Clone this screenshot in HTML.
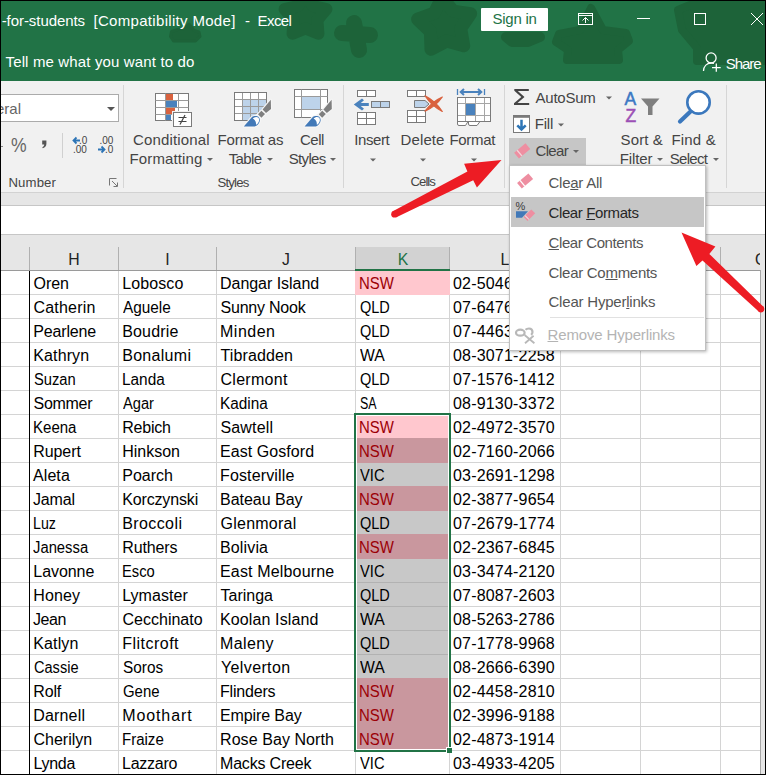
<!DOCTYPE html>
<html><head><meta charset="utf-8"><title>Excel</title>
<style>
html,body{margin:0;padding:0;}
body{width:766px;height:775px;position:relative;overflow:hidden;background:#fff;font-family:"Liberation Sans",sans-serif;}
.a{position:absolute;}
#frame{position:absolute;left:0;top:0;width:764px;height:773px;border:1px solid #000;z-index:50;pointer-events:none}
#title{position:absolute;left:1px;top:1px;width:764px;height:80px;background:#217346;overflow:hidden}
.tt{position:absolute;color:#fff;font-size:15px;white-space:pre;line-height:20px}
#ribbon{position:absolute;left:1px;top:81px;width:764px;height:111px;background:#f1f1f1;border-bottom:1px solid #d2d2d2}
#band{position:absolute;left:1px;top:193px;width:764px;height:12px;background:#e6e6e6}
#fbar{position:absolute;left:1px;top:205px;width:764px;height:30px;background:#fff;border-top:1px solid #c6c6c6;border-bottom:1px solid #c6c6c6;box-sizing:border-box}
#hdr{position:absolute;left:1px;top:235px;width:764px;height:35px;background:#e6e6e6}
.rl{position:absolute;color:#444;font-size:15px;line-height:19.5px;white-space:pre;text-align:center}
.gs{position:absolute;top:85px;width:1px;height:103px;background:#d6d6d6}
.gl{position:absolute;color:#444;font-size:13.2px;line-height:16px;white-space:pre}
.c{position:absolute;transform-origin:0 50%;font-size:16px;line-height:24px;height:24px;color:#000;white-space:pre}
.c.r{color:#9c0006}
.f{position:absolute}
.h{position:absolute;left:1px;width:759px;height:1px;background:#d4d4d4}
.v{position:absolute;top:271px;width:1px;height:504px;background:#d4d4d4}
.ch{position:absolute;top:249px;height:21px;line-height:21px;font-size:15.8px;color:#222;text-align:center}
.hs{position:absolute;top:247px;width:1px;height:23px;background:#b0b0b0}
.mi{position:absolute;left:548px;color:#444;font-size:15px;line-height:20px;white-space:pre}
.t{position:absolute;white-space:pre;line-height:20px;height:20px;z-index:30}
.t u{text-decoration:underline;text-underline-offset:0.5px;text-decoration-thickness:1px}
</style></head><body>
<div id="title">
<svg class="a" style="left:0;top:0" width="764" height="80" viewBox="1 1 764 80">
<g fill="#1d6339" stroke="#1d6339" stroke-linejoin="round" stroke-linecap="round">
<path d="M189 24 L194 30.500 L199 32 L200 36.500 L195.500 41 L173.500 41 L170.500 36.500 L171.500 31.500 L178 29.500 L184 28.500 Z" stroke-width="3"/>
<path d="M305.5 -6.0 L312.8 5.9 L326.4 9.2 L317.4 19.9 L318.4 33.8 L305.5 28.5 L292.6 33.8 L293.6 19.9 L284.6 9.2 L298.2 5.9 Z" stroke-width="12"/>
<path d="M354 23 L359 50 M342 33 L370 35" stroke-width="16" fill="none"/>
<path d="M442.1 -2.8 L453.0 11.1 L470.6 13.6 L460.7 28.3 L463.7 45.8 L446.7 40.9 L431.0 49.2 L430.4 31.5 L417.6 19.2 L434.3 13.1 Z" stroke-width="13"/>
<path d="M506 37 L540 37 L528 42 L512 42 Z" stroke-width="10"/>
<path d="M591 8 L603 30 L626 33 L629 41 L618 50 L619 60 L567 60 L568 50 L556 42 L559 34 L580 30 Z" stroke-width="8"/>
<path d="M678 10 L690 5 L770 5 L770 61 L697 61 L697 48 L682 30 Z" stroke-width="8"/>
</g>
</svg>
<div class="a" style="left:480px;top:7px;width:67px;height:23px;background:#fff;border-radius:1px"></div>
<svg class="a" style="left:0;top:0" width="764" height="80" viewBox="1 1 764 80" fill="none" stroke="#fff" stroke-width="1">
<rect x="578.500" y="13.500" width="14" height="11"/><path d="M578.500 15.500h14M585.500 23v-5.500M582.500 20.500l3-3 3 3"/>
<path d="M637 18.500h13"/>
<rect x="694.500" y="13.500" width="11" height="11"/>
<path d="M751 13l12 12M763 13l-12 12"/>
<circle cx="711.100" cy="57.900" r="5" stroke-width="1.300"/><path d="M703.500 71c0.200-5 3.500-8 8-8 1 0 1.800 0.100 2.500 0.300" stroke-width="1.300"/><path d="M716.300 63.400v8.400M712 67.600h8.700" stroke-width="1.300"/>
</svg>
</div>
<div id="ribbon"></div>
<div id="band"></div>
<div id="fbar"></div>
<div id="hdr"></div>

<!-- ribbon: number group -->
<div class="a" style="left:1px;top:94px;width:118px;height:28px;background:#fff;border:1px solid #ababab;border-left:none;box-sizing:border-box"></div>
<div class="rl" style="left:-4px;top:99px;color:#666;font-size:15px">eral</div>
<div class="a" style="left:107px;top:107px;width:0;height:0;border-left:4px solid transparent;border-right:4px solid transparent;border-top:4px solid #555"></div>
<div class="a" style="left:1px;top:146px;width:2px;height:1px;background:#888"></div>
<div class="rl" style="left:11px;top:134px;font-size:19.5px;line-height:22px;transform:scaleX(0.9);transform-origin:0 0;color:#666">%</div>
<svg class="a" style="left:40px;top:139px" width="9" height="11" viewBox="0 0 9 11"><path d="M2.200 1.500h4.200v3.200c0 2.200-1.200 3.600-3.600 4.600l-0.500-1c1.300-0.700 1.900-1.500 1.900-2.800h-2z" fill="#555"/></svg>
<div class="a" style="left:62px;top:133px;width:1px;height:25px;background:#d0d0d0"></div>
<svg class="a" style="left:70px;top:135px" width="46" height="20" viewBox="70 135 46 20">
<g font-family="Liberation Sans, sans-serif" font-size="10" fill="#444">
<text x="79" y="144.300">.0</text><text x="73" y="153.300">.00</text>
<text x="99.500" y="144.300">.00</text><text x="105" y="153.300">.0</text>
</g>
<g fill="none" stroke="#2e75b6" stroke-width="1.800"><path d="M80 140.500h-6.500M76.500 137.500l-3 3 3 3"/><path d="M98 149.500h6.500M101.500 146.500l3 3-3 3"/></g>
</svg>
<svg class="a" style="left:108px;top:177px" width="11" height="11" viewBox="0 0 11 11" fill="none" stroke="#777" stroke-width="1"><path d="M1.500 8.500v-7h7"/><path d="M4 4l5 5M9.500 5.500v4h-4"/></svg>
<div class="gs" style="left:123px"></div>
<div class="gs" style="left:343px"></div>
<div class="gs" style="left:504px"></div>
<div class="gs" style="left:726px"></div>

<div class="a" style="left:509px;top:138px;width:77px;height:27px;background:#c6c6c6"></div>

<!-- ribbon icons -->
<svg class="a" style="left:0;top:0" width="766" height="200" viewBox="0 0 766 200">
<!-- dropdown arrows -->
<g fill="#666">
<path d="M207 158h6l-3 3z"/><path d="M267 158h6l-3 3z"/><path d="M330 158h6l-3 3z"/>
<path d="M370 158.500h6l-3 3z"/><path d="M420 158.500h6l-3 3z"/><path d="M471 158.500h6l-3 3z"/>
<path d="M606 96.500h6l-3 3z"/><path d="M558 123.500h6l-3 3z"/><path d="M573 150h6l-3 3z"/>
<path d="M657 158h6l-3 3z"/><path d="M713 158h6l-3 3z"/>
</g>
<!-- conditional formatting -->
<g>
<rect x="155.500" y="93.500" width="33" height="27" fill="#fff" stroke="#7a7a7a"/>
<path d="M155.500 100.500h33M155.500 107.500h33M155.500 114.500h33M165.500 93.500v27M178.500 93.500v27" stroke="#9a9a9a" fill="none"/>
<rect x="166" y="94" width="7" height="6" fill="#d9623f"/><rect x="166" y="101" width="11" height="6" fill="#4a82bd"/>
<rect x="166" y="108" width="9" height="6" fill="#d9623f"/><rect x="166" y="115" width="5" height="5" fill="#4a82bd"/>
<rect x="172" y="111" width="21" height="17" fill="#f1f1f1"/>
<rect x="173.500" y="112.500" width="18" height="14" fill="#fff" stroke="#7a7a7a"/>
<path d="M178.500 117.500h8M178.500 121.500h8M185 115l-5 9.500" stroke="#444" stroke-width="1.200" fill="none"/>
</g>
<!-- format as table -->
<g>
<rect x="234.500" y="92.500" width="32" height="28" fill="#fff" stroke="#7a7a7a"/>
<rect x="243" y="100" width="24" height="21" fill="#bdd3ea"/>
<path d="M234.500 99.500h32M234.500 106.500h32M234.500 113.500h32M242.500 92.500v28M250.500 92.500v28M258.500 92.500v28" stroke="#9a9a9a" fill="none"/>
<rect x="234.500" y="92.500" width="32" height="28" fill="none" stroke="#7a7a7a"/>
<g>
<path d="M262.500 110 L268 104.500 L268 122 L248.500 122 L253 116.500 Z" fill="#f1f1f1"/>
<g stroke="#f6f6f6" stroke-width="2.200" stroke-linejoin="round" fill="#f6f6f6">
<path d="M270.800 99.800 L271 108.900 L266 113 L262.600 109.500 Z"/>
<path d="M261.400 110.800 L265 114 L261.400 117.700 L258 114.200 Z"/>
<path d="M243.800 126.600 L252 117 C253.500 115.800 257 115.500 258.600 117 C260.400 118.800 260.200 121.500 258.500 123.800 C257 125.800 255.500 126.600 253.500 126.600 Z"/>
</g>
<path d="M270.800 99.800 L271 108.900 L266 113 L262.600 109.500 Z" fill="#7f7f7f"/>
<path d="M261.400 110.800 L265 114 L261.400 117.700 L258 114.200 Z" fill="#7f7f7f"/>
<path d="M243.800 126.600 L252 117 C253.500 115.800 257 115.500 258.600 117 C260.400 118.800 260.200 121.500 258.500 123.800 C257 125.800 255.500 126.600 253.500 126.600 Z" fill="#4279b8"/>
<path d="M252.800 118.600 C254.300 116.700 257 116.400 258.200 117.600 C259.600 119.100 259.300 121.500 257.900 123.300 C257.300 124.100 256.700 124.500 256 124.700 C256.300 122.500 255.400 120.200 252.800 118.600 Z" fill="#fff"/>
</g>
</g>
<!-- cell styles -->
<g>
<rect x="294.500" y="89.500" width="33" height="28" fill="#fff" stroke="#7a7a7a"/>
<path d="M294.500 96.500h33M294.500 109.500h33M301.500 89.500v28M320.500 89.500v28" stroke="#9a9a9a" fill="none"/>
<rect x="302" y="97" width="18" height="12" fill="#bdd3ea"/>
<g transform="translate(60.800,0)">
<path d="M262.500 110 L268 104.500 L268 122 L248.500 122 L253 116.500 Z" fill="#f1f1f1"/>
<g stroke="#f6f6f6" stroke-width="2.200" stroke-linejoin="round" fill="#f6f6f6">
<path d="M270.800 99.800 L271 108.900 L266 113 L262.600 109.500 Z"/>
<path d="M261.400 110.800 L265 114 L261.400 117.700 L258 114.200 Z"/>
<path d="M243.800 126.600 L252 117 C253.500 115.800 257 115.500 258.600 117 C260.400 118.800 260.200 121.500 258.500 123.800 C257 125.800 255.500 126.600 253.500 126.600 Z"/>
</g>
<path d="M270.800 99.800 L271 108.900 L266 113 L262.600 109.500 Z" fill="#7f7f7f"/>
<path d="M261.400 110.800 L265 114 L261.400 117.700 L258 114.200 Z" fill="#7f7f7f"/>
<path d="M243.800 126.600 L252 117 C253.500 115.800 257 115.500 258.600 117 C260.400 118.800 260.200 121.500 258.500 123.800 C257 125.800 255.500 126.600 253.500 126.600 Z" fill="#4279b8"/>
<path d="M252.800 118.600 C254.300 116.700 257 116.400 258.200 117.600 C259.600 119.100 259.300 121.500 257.900 123.300 C257.300 124.100 256.700 124.500 256 124.700 C256.300 122.500 255.400 120.200 252.800 118.600 Z" fill="#fff"/>
</g>
</g>
<!-- insert -->
<g fill="#fff" stroke="#7a7a7a">
<rect x="357.500" y="90.500" width="18" height="6"/><path d="M366.500 90.500v6"/>
<rect x="371.500" y="101.500" width="18" height="6" fill="#bdd3ea"/><path d="M380.500 101.500v6"/>
<rect x="357.500" y="112.500" width="18" height="12"/><path d="M366.500 112.500v12M357.500 118.500h18"/>
<path d="M353.800 104.500 L362 98.400 L364 100.300 L360.800 103 L368.800 103 L368.800 106 L360.800 106 L364 108.700 L362 110.600 Z" fill="#4a82bd" stroke="none"/>
</g>
<!-- delete -->
<g fill="#fff" stroke="#7a7a7a">
<rect x="407.500" y="90.500" width="18" height="6"/><path d="M416.500 90.500v6"/>
<path d="M414.500 100.500h10.500l4 3.500-4 3.500h-10.500z" fill="#bdd3ea"/>
<rect x="407.500" y="110.500" width="18" height="12"/><path d="M416.500 110.500v12M407.500 116.500h18"/>
<path d="M425 95.800 Q435.800 101.300 442.300 111.500 Q431.500 106 425 95.800 Z" fill="#d9623f" stroke="#d9623f" stroke-width="1.200" stroke-linejoin="round"/><path d="M442.300 97 Q431.700 101.700 425 111.200 Q435.700 106.500 442.300 97 Z" fill="#d9623f" stroke="#d9623f" stroke-width="1.200" stroke-linejoin="round"/>
</g>
<!-- format -->
<g fill="#fff" stroke="#7a7a7a">
<rect x="457.500" y="97.500" width="33" height="24"/>
<path d="M458 103.500h32M458 115.500h32M465.500 98v23M475.500 98v23M484.500 98v23" stroke="#a6a6a6"/>
<rect x="466" y="104" width="9" height="11" fill="#4a82bd" stroke="none"/>
<path d="M457.500 121.500v2.500q0 1.500 1.500 1.500h6.500l2.500-4M468.500 121.500v2.500q0 1.500 1.500 1.500h7l3-4" fill="#fff"/>
<rect x="457.500" y="97.500" width="33" height="24" fill="none"/>
<path d="M457.500 89v6M484.500 89v6" stroke="#4a82bd" stroke-width="1.300" fill="none"/>
<path d="M461.500 92h19M464 89l-3.300 3 3.300 3M478 89l3.300 3-3.300 3" stroke="#4a82bd" stroke-width="2" fill="none"/>
</g>
<!-- sigma -->
<path d="M514.300 89h14.500v2h-11l6.700 5.900-7 6.100h11.700v2h-15.200v-1.700l7.300-6.400-7-6.200z" fill="#444"/>
<!-- fill -->
<rect x="513.500" y="116.500" width="16" height="16" fill="#fff" stroke="#7a7a7a"/><rect x="513" y="115" width="17" height="2.800" fill="#7a7a7a"/>
<path d="M521.500 119.800v9.500M517.300 125.300l4.200 4.200 4.200-4.200" stroke="#2e75b6" stroke-width="2.500" fill="none"/>
<!-- eraser -->
<g transform="translate(522.200,150.800) rotate(-40)"><rect x="-7.400" y="-3.700" width="14.800" height="7.400" fill="#ee8ea1"/><rect x="-4.200" y="-3.700" width="1.300" height="7.400" fill="#f3d5db"/></g>
<!-- sort a z -->
<g font-family="Liberation Sans, sans-serif" font-size="17.500">
<text x="624.500" y="104.500" fill="#3b78c4" stroke="#3b78c4" stroke-width="0.500">A</text><text x="625.500" y="121.600" fill="#9b4fb5" stroke="#9b4fb5" stroke-width="0.500">Z</text></g>
<path d="M641 98.500h18.500l-7 8v8.500h-4.500v-8.500z" fill="#7f7f7f"/>
<!-- magnifier -->
<circle cx="698.500" cy="102.400" r="11.200" fill="#fff" stroke="#3b78bd" stroke-width="2.600"/>
<path d="M690.500 111.500l-10.500 10" stroke="#3b78bd" stroke-width="4.200" stroke-linecap="round"/>
</svg>

<!-- column headers -->
<div class="a" style="left:356px;top:247px;width:93px;height:23px;background:#d2d2d2"></div>
<div class="hs" style="left:29px"></div><div class="hs" style="left:118px"></div><div class="hs" style="left:216px"></div><div class="hs" style="left:355px"></div><div class="hs" style="left:449px"></div><div class="hs" style="left:560px"></div><div class="hs" style="left:640px"></div><div class="hs" style="left:720px"></div>
<div class="a" style="left:1px;top:270px;width:764px;height:1px;background:#9a9a9a"></div>
<div class="a" style="left:355px;top:269px;width:95px;height:2px;background:#217346"></div>
<div class="ch" style="left:30px;width:88px">H</div>
<div class="ch" style="left:119px;width:97px">I</div>
<div class="ch" style="left:217px;width:138px">J</div>
<div class="ch" style="left:356px;width:94px;color:#217346">K</div>
<div class="ch" style="left:450px;width:110px">L</div>
<div class="ch" style="left:755px;width:5px;text-align:left;overflow:hidden">O</div>

<!-- grid -->
<div class="h" style="top:294px"></div>
<div class="h" style="top:318px"></div>
<div class="h" style="top:342px"></div>
<div class="h" style="top:366px"></div>
<div class="h" style="top:390px"></div>
<div class="h" style="top:414px"></div>
<div class="h" style="top:438px"></div>
<div class="h" style="top:462px"></div>
<div class="h" style="top:486px"></div>
<div class="h" style="top:510px"></div>
<div class="h" style="top:534px"></div>
<div class="h" style="top:558px"></div>
<div class="h" style="top:582px"></div>
<div class="h" style="top:606px"></div>
<div class="h" style="top:630px"></div>
<div class="h" style="top:654px"></div>
<div class="h" style="top:678px"></div>
<div class="h" style="top:702px"></div>
<div class="h" style="top:726px"></div>
<div class="h" style="top:750px"></div>
<div class="h" style="top:774px"></div>
<div class="v" style="left:118px"></div>
<div class="v" style="left:216px"></div>
<div class="v" style="left:355px"></div>
<div class="v" style="left:449px"></div>
<div class="v" style="left:560px"></div>
<div class="v" style="left:640px"></div>
<div class="v" style="left:720px"></div>
<div class="f" style="left:355px;top:271px;width:95px;height:24px;background:#ffc7ce"></div>
<div class="f" style="left:357px;top:416px;width:91px;height:333px;background:#c8c8c8"></div>
<div class="f" style="left:357px;top:416px;width:91px;height:22px;background:#ffc7ce"></div>
<div class="f" style="left:357px;top:438px;width:91px;height:25px;background:#c9979e"></div>
<div class="f" style="left:357px;top:486px;width:91px;height:25px;background:#c9979e"></div>
<div class="f" style="left:357px;top:534px;width:91px;height:25px;background:#c9979e"></div>
<div class="f" style="left:357px;top:582px;width:91px;height:1px;background:#b2b2b2"></div>
<div class="f" style="left:357px;top:606px;width:91px;height:1px;background:#b2b2b2"></div>
<div class="f" style="left:357px;top:630px;width:91px;height:1px;background:#b2b2b2"></div>
<div class="f" style="left:357px;top:654px;width:91px;height:1px;background:#b2b2b2"></div>
<div class="f" style="left:357px;top:678px;width:91px;height:25px;background:#c9979e"></div>
<div class="f" style="left:357px;top:702px;width:91px;height:25px;background:#c9979e"></div>
<div class="f" style="left:357px;top:726px;width:91px;height:23px;background:#c9979e"></div>
<div class="a" style="left:29px;top:271px;width:1px;height:504px;background:#000"></div>
<div class="c" style="left:33.50px;top:272px;letter-spacing:-0.024px">Oren</div>
<div class="c" style="left:122.20px;top:272px;letter-spacing:0.101px">Lobosco</div>
<div class="c" style="left:220.00px;top:272px;letter-spacing:-0.035px">Dangar Island</div>
<div class="c r" style="left:358.67px;top:272px;transform:scaleX(0.9348)">NSW</div>
<div class="c" style="left:453.00px;top:272px;letter-spacing:0.187px">02-5046</div>
<div class="c" style="left:33.50px;top:296px;letter-spacing:0.189px">Catherin</div>
<div class="c" style="left:122.50px;top:296px;transform:scaleX(0.9595)">Aguele</div>
<div class="c" style="left:220.50px;top:296px;letter-spacing:-0.218px">Sunny Nook</div>
<div class="c" style="left:359.60px;top:296px;transform:scaleX(0.9059)">QLD</div>
<div class="c" style="left:453.00px;top:296px;letter-spacing:0.187px">07-6476</div>
<div class="c" style="left:33.30px;top:320px;letter-spacing:-0.178px">Pearlene</div>
<div class="c" style="left:122.20px;top:320px;letter-spacing:0.158px">Boudrie</div>
<div class="c" style="left:220.00px;top:320px;letter-spacing:0.504px">Minden</div>
<div class="c" style="left:359.60px;top:320px;transform:scaleX(0.9059)">QLD</div>
<div class="c" style="left:453.00px;top:320px;letter-spacing:0.187px">07-4463</div>
<div class="c" style="left:33.30px;top:344px;letter-spacing:0.110px">Kathryn</div>
<div class="c" style="left:122.20px;top:344px;letter-spacing:0.293px">Bonalumi</div>
<div class="c" style="left:220.50px;top:344px;letter-spacing:0.106px">Tibradden</div>
<div class="c" style="left:359.60px;top:344px;transform:scaleX(0.9840)">WA</div>
<div class="c" style="left:453.00px;top:344px;letter-spacing:0.187px">08-3071-2258</div>
<div class="c" style="left:33.50px;top:368px;transform:scaleX(0.9197)">Suzan</div>
<div class="c" style="left:122.24px;top:368px;transform:scaleX(0.9611)">Landa</div>
<div class="c" style="left:220.50px;top:368px;letter-spacing:0.277px">Clermont</div>
<div class="c" style="left:359.60px;top:368px;transform:scaleX(0.9059)">QLD</div>
<div class="c" style="left:453.00px;top:368px;letter-spacing:0.187px">07-1576-1412</div>
<div class="c" style="left:33.50px;top:392px;letter-spacing:-0.285px">Sommer</div>
<div class="c" style="left:122.50px;top:392px;transform:scaleX(0.9168)">Agar</div>
<div class="c" style="left:220.04px;top:392px;transform:scaleX(0.9587)">Kadina</div>
<div class="c" style="left:359.60px;top:392px;transform:scaleX(0.7752)">SA</div>
<div class="c" style="left:453.00px;top:392px;letter-spacing:0.187px">08-9130-3372</div>
<div class="c" style="left:33.36px;top:416px;transform:scaleX(0.9390)">Keena</div>
<div class="c" style="left:122.20px;top:416px;letter-spacing:-0.201px">Rebich</div>
<div class="c" style="left:220.50px;top:416px;letter-spacing:0.146px">Sawtell</div>
<div class="c r" style="left:358.67px;top:416px;transform:scaleX(0.9348)">NSW</div>
<div class="c" style="left:453.00px;top:416px;letter-spacing:0.187px">02-4972-3570</div>
<div class="c" style="left:33.30px;top:440px;letter-spacing:-0.096px">Rupert</div>
<div class="c" style="left:122.20px;top:440px;letter-spacing:-0.001px">Hinkson</div>
<div class="c" style="left:220.00px;top:440px;letter-spacing:0.066px">East Gosford</div>
<div class="c r" style="left:358.67px;top:440px;transform:scaleX(0.9348)">NSW</div>
<div class="c" style="left:453.00px;top:440px;letter-spacing:0.187px">02-7160-2066</div>
<div class="c" style="left:33.00px;top:464px;letter-spacing:0.082px">Aleta</div>
<div class="c" style="left:122.20px;top:464px;letter-spacing:0.021px">Poarch</div>
<div class="c" style="left:220.00px;top:464px;letter-spacing:0.139px">Fosterville</div>
<div class="c" style="left:359.60px;top:464px;transform:scaleX(0.9189)">VIC</div>
<div class="c" style="left:453.00px;top:464px;letter-spacing:0.187px">03-2691-1298</div>
<div class="c" style="left:33.00px;top:488px;letter-spacing:-0.181px">Jamal</div>
<div class="c" style="left:122.20px;top:488px;letter-spacing:-0.144px">Korczynski</div>
<div class="c" style="left:220.00px;top:488px;letter-spacing:-0.025px">Bateau Bay</div>
<div class="c r" style="left:358.67px;top:488px;transform:scaleX(0.9348)">NSW</div>
<div class="c" style="left:453.00px;top:488px;letter-spacing:0.187px">02-3877-9654</div>
<div class="c" style="left:33.41px;top:512px;transform:scaleX(0.8872)">Luz</div>
<div class="c" style="left:122.20px;top:512px;letter-spacing:0.407px">Broccoli</div>
<div class="c" style="left:220.50px;top:512px;letter-spacing:0.244px">Glenmoral</div>
<div class="c" style="left:359.60px;top:512px;transform:scaleX(0.9059)">QLD</div>
<div class="c" style="left:453.00px;top:512px;letter-spacing:0.187px">07-2679-1774</div>
<div class="c" style="left:33.00px;top:536px;transform:scaleX(0.9247)">Janessa</div>
<div class="c" style="left:122.20px;top:536px;letter-spacing:-0.104px">Ruthers</div>
<div class="c" style="left:220.00px;top:536px;letter-spacing:0.144px">Bolivia</div>
<div class="c r" style="left:358.67px;top:536px;transform:scaleX(0.9348)">NSW</div>
<div class="c" style="left:453.00px;top:536px;letter-spacing:0.187px">02-2367-6845</div>
<div class="c" style="left:33.30px;top:560px;letter-spacing:-0.065px">Lavonne</div>
<div class="c" style="left:122.28px;top:560px;transform:scaleX(0.9201)">Esco</div>
<div class="c" style="left:220.00px;top:560px;letter-spacing:0.164px">East Melbourne</div>
<div class="c" style="left:359.60px;top:560px;transform:scaleX(0.9189)">VIC</div>
<div class="c" style="left:453.00px;top:560px;letter-spacing:0.187px">03-3474-2120</div>
<div class="c" style="left:33.30px;top:584px;letter-spacing:0.088px">Honey</div>
<div class="c" style="left:122.20px;top:584px;letter-spacing:0.046px">Lymaster</div>
<div class="c" style="left:220.50px;top:584px;letter-spacing:0.004px">Taringa</div>
<div class="c" style="left:359.60px;top:584px;transform:scaleX(0.9059)">QLD</div>
<div class="c" style="left:453.00px;top:584px;letter-spacing:0.187px">07-8087-2603</div>
<div class="c" style="left:33.00px;top:608px;letter-spacing:-0.399px">Jean</div>
<div class="c" style="left:122.50px;top:608px;letter-spacing:0.006px">Cecchinato</div>
<div class="c" style="left:220.00px;top:608px;letter-spacing:0.120px">Koolan Island</div>
<div class="c" style="left:359.60px;top:608px;transform:scaleX(0.9840)">WA</div>
<div class="c" style="left:453.00px;top:608px;letter-spacing:0.187px">08-5263-2786</div>
<div class="c" style="left:33.30px;top:632px;letter-spacing:0.106px">Katlyn</div>
<div class="c" style="left:122.20px;top:632px;letter-spacing:0.487px">Flitcroft</div>
<div class="c" style="left:220.00px;top:632px;letter-spacing:0.404px">Maleny</div>
<div class="c" style="left:359.60px;top:632px;transform:scaleX(0.9059)">QLD</div>
<div class="c" style="left:453.00px;top:632px;letter-spacing:0.187px">07-1778-9968</div>
<div class="c" style="left:33.50px;top:656px;transform:scaleX(0.9101)">Cassie</div>
<div class="c" style="left:122.50px;top:656px;transform:scaleX(0.9594)">Soros</div>
<div class="c" style="left:221.00px;top:656px;letter-spacing:0.372px">Yelverton</div>
<div class="c" style="left:359.60px;top:656px;transform:scaleX(0.9840)">WA</div>
<div class="c" style="left:453.00px;top:656px;letter-spacing:0.187px">08-2666-6390</div>
<div class="c" style="left:33.30px;top:680px;letter-spacing:-0.169px">Rolf</div>
<div class="c" style="left:122.50px;top:680px;transform:scaleX(0.9327)">Gene</div>
<div class="c" style="left:220.00px;top:680px;letter-spacing:-0.187px">Flinders</div>
<div class="c r" style="left:358.67px;top:680px;transform:scaleX(0.9348)">NSW</div>
<div class="c" style="left:453.00px;top:680px;letter-spacing:0.187px">02-4458-2810</div>
<div class="c" style="left:33.30px;top:704px;letter-spacing:0.161px">Darnell</div>
<div class="c" style="left:122.20px;top:704px;letter-spacing:0.901px">Moothart</div>
<div class="c" style="left:220.00px;top:704px;letter-spacing:-0.111px">Empire Bay</div>
<div class="c r" style="left:358.67px;top:704px;transform:scaleX(0.9348)">NSW</div>
<div class="c" style="left:453.00px;top:704px;letter-spacing:0.187px">02-3996-9188</div>
<div class="c" style="left:33.50px;top:728px;letter-spacing:-0.013px">Cherilyn</div>
<div class="c" style="left:122.26px;top:728px;transform:scaleX(0.9390)">Fraize</div>
<div class="c" style="left:220.00px;top:728px;letter-spacing:0.074px">Rose Bay North</div>
<div class="c r" style="left:358.67px;top:728px;transform:scaleX(0.9348)">NSW</div>
<div class="c" style="left:453.00px;top:728px;letter-spacing:0.187px">02-4873-1914</div>
<div class="c" style="left:33.40px;top:752px;letter-spacing:-0.250px">Lynda</div>
<div class="c" style="left:122.10px;top:752px;letter-spacing:-0.271px">Lazzaro</div>
<div class="c" style="left:220.00px;top:752px;letter-spacing:-0.185px">Macks Creek</div>
<div class="c" style="left:359.60px;top:752px;transform:scaleX(0.9189)">VIC</div>
<div class="c" style="left:453.00px;top:752px;letter-spacing:0.187px">03-4933-4205</div>
<!-- selection -->
<div class="a" style="left:354px;top:413px;width:93px;height:335px;border:2px solid #217346;outline:1px solid #fff;outline-offset:-3px"></div>
<div class="a" style="left:446px;top:747px;width:5px;height:5px;background:#217346;border-left:1px solid #fff;border-top:1px solid #fff"></div>
<div class="a" style="left:760px;top:270px;width:5px;height:505px;background:#e6e6e6;border-left:1px solid #a6a6a6"></div>

<!-- dropdown menu -->
<div class="a" style="left:509px;top:165px;width:197px;height:186px;background:#fff;border:1px solid #c0c0c0;box-sizing:border-box;box-shadow:1px 1px 3px rgba(0,0,0,0.28)"></div>
<div class="a" style="left:511px;top:197px;width:193px;height:29.500px;background:#c6c6c6"></div>
<div class="a" style="left:550px;top:317px;width:154px;height:1px;background:#e1e1e1"></div>

<!-- menu icons -->
<svg class="a" style="left:0;top:0;z-index:31" width="766" height="360" viewBox="0 0 766 360">
<g transform="translate(525.100,181) rotate(-40)"><rect x="-7.400" y="-3.700" width="14.800" height="7.400" fill="#ee8ea1"/><rect x="-4.200" y="-3.700" width="1.300" height="7.400" fill="#fff"/></g>
<text x="515.500" y="209.800" font-family="Liberation Sans, sans-serif" font-size="11" fill="#3a3a3a">%</text>
<path d="M516 211.200h12l-6 6.600h-6z" fill="#4279b8"/>
<g transform="translate(529.400,215.200) rotate(-45)"><rect x="-5.400" y="-2.800" width="10.800" height="5.600" fill="#ee8ea1"/><rect x="-3.800" y="-2.800" width="1" height="5.600" fill="#e8e8e8"/></g>
<g fill="none" stroke="#b8b8b8">
<ellipse cx="520.300" cy="332.700" rx="4.300" ry="3" stroke-width="2.200"/>
<path d="M525.500 329.800c1-1 2.200-1.300 3.500-1.300 2.200 0 3.500 1.600 3.500 3.600 0 1.200-0.500 2.200-1.500 2.800" stroke-width="2.200"/>
<path d="M524.600 335l9.800 8.300M533.600 335.800l-8.600 7.500" stroke-width="1.800"/>
</g>
</svg>
<!-- arrows -->
<svg class="a" style="left:0;top:0;z-index:40" width="766" height="775">
<g fill="#ed1c24" stroke="none">
<path d="M392.800 211.200 L467.400 171.600 L464.100 163.700 L501.500 160 L476.900 187.500 L473.200 180.200 L396.400 217.300 Z"/>
<circle cx="394.600" cy="214.200" r="3.400"/>
<path d="M763.400 306.700 L709.300 253.900 L715.400 246.400 L681.500 232.500 L696.400 266 L702.500 260.600 L758.700 311.400 Z"/>
<circle cx="761" cy="309.100" r="3.400"/>
</g>
</svg>
<div class="t" style="left:1.70px;top:11px;font-size:15px;color:#fff;letter-spacing:-0.067px;">-for-students</div>
<div class="t" style="left:93.40px;top:11px;font-size:15px;color:#fff;letter-spacing:0.320px;">[Compatibility Mode]</div>
<div class="t" style="left:245.00px;top:11px;font-size:15px;color:#fff;letter-spacing:0.000px;">-</div>
<div class="t" style="left:257.60px;top:11px;font-size:15px;color:#fff;letter-spacing:-0.587px;">Excel</div>
<div class="t" style="left:5.50px;top:52px;font-size:15px;color:#fff;letter-spacing:0.144px;">Tell me what you want to do</div>
<div class="t" style="left:492.50px;top:9px;font-size:15px;color:#217346;letter-spacing:-0.237px;">Sign in</div>
<div class="t" style="left:725.70px;top:54px;font-size:15px;color:#fff;letter-spacing:-1.021px;">Share</div>
<div class="t" style="left:133.10px;top:130px;font-size:15px;color:#444;letter-spacing:0.138px;">Conditional</div>
<div class="t" style="left:129.50px;top:149px;font-size:15px;color:#444;letter-spacing:0.128px;">Formatting</div>
<div class="t" style="left:217.50px;top:130px;font-size:15px;color:#444;letter-spacing:-0.189px;">Format as</div>
<div class="t" style="left:228.70px;top:149px;font-size:15px;color:#444;letter-spacing:-0.629px;">Table</div>
<div class="t" style="left:300.00px;top:130px;font-size:15px;color:#444;letter-spacing:-0.502px;">Cell</div>
<div class="t" style="left:288.80px;top:149px;font-size:15px;color:#444;letter-spacing:-0.689px;">Styles</div>
<div class="t" style="left:354.30px;top:130px;font-size:15px;color:#444;letter-spacing:-0.429px;">Insert</div>
<div class="t" style="left:400.60px;top:130px;font-size:15px;color:#444;letter-spacing:0.097px;">Delete</div>
<div class="t" style="left:449.40px;top:130px;font-size:15px;color:#444;letter-spacing:-0.287px;">Format</div>
<div class="t" style="left:535.50px;top:88px;font-size:15px;color:#444;letter-spacing:-0.234px;">AutoSum</div>
<div class="t" style="left:534.80px;top:114px;font-size:15px;color:#444;letter-spacing:-0.209px;">Fill</div>
<div class="t" style="left:535.50px;top:141px;font-size:15px;color:#444;letter-spacing:-0.662px;">Clear</div>
<div class="t" style="left:620.60px;top:130px;font-size:15px;color:#444;letter-spacing:0.105px;">Sort &amp;</div>
<div class="t" style="left:619.80px;top:149px;font-size:15px;color:#444;letter-spacing:-0.147px;">Filter</div>
<div class="t" style="left:671.40px;top:130px;font-size:15px;color:#444;letter-spacing:0.191px;">Find &amp;</div>
<div class="t" style="left:669.70px;top:149px;font-size:15px;color:#444;letter-spacing:-0.684px;">Select</div>
<div class="t" style="left:8.50px;top:173px;font-size:13.2px;color:#444;letter-spacing:0.098px;">Number</div>
<div class="t" style="left:217.60px;top:173px;font-size:13.2px;color:#444;letter-spacing:-0.844px;">Styles</div>
<div class="t" style="left:410.50px;top:172px;font-size:13.2px;color:#444;letter-spacing:-0.979px;">Cells</div>
<div class="t" style="left:548.50px;top:173px;font-size:15px;color:#555;letter-spacing:-0.256px;">Cle<u>a</u>r All</div>
<div class="t" style="left:548.50px;top:203px;font-size:15px;color:#262626;letter-spacing:-0.385px;">Clear <u>F</u>ormats</div>
<div class="t" style="left:548.50px;top:233px;font-size:15px;color:#555;letter-spacing:-0.388px;"><u>C</u>lear Contents</div>
<div class="t" style="left:548.50px;top:263px;font-size:15px;color:#555;letter-spacing:-0.287px;">Clear Co<u>m</u>ments</div>
<div class="t" style="left:548.50px;top:292px;font-size:15px;color:#555;letter-spacing:-0.209px;">Clear Hyper<u>l</u>inks</div>
<div class="t" style="left:547.50px;top:325px;font-size:15px;color:#b4b4b4;letter-spacing:-0.153px;"><u>R</u>emove Hyperlinks</div>
<div id="frame"></div>
</body></html>
